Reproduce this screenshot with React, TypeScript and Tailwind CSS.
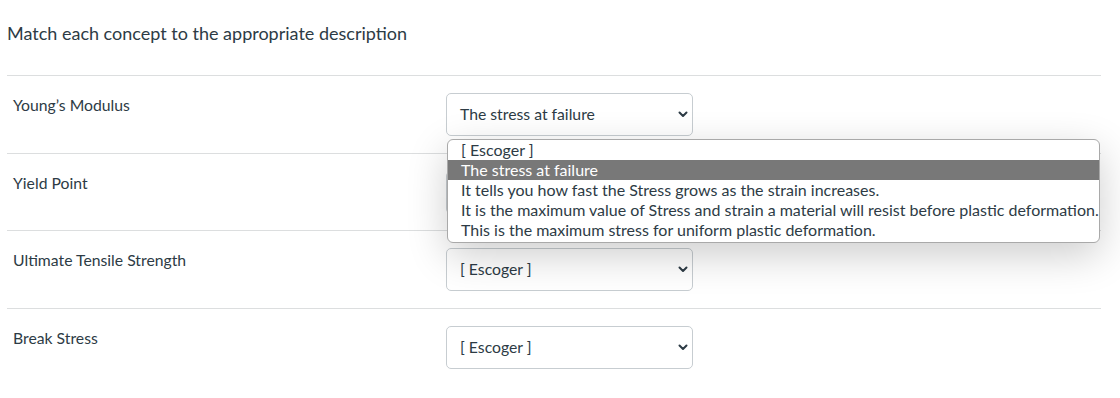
import React from "react";

const options = [
    "[ Escoger ]",
    "The stress at failure",
    "It tells you how fast the Stress grows as the strain increases.",
    "It is the maximum value of Stress and strain a material will resist before plastic deformation.",
    "This is the maximum stress for uniform plastic deformation.",
];

const rows = [
    { label: "Young\u2019s Modulus", value: "The stress at failure", open: true, h: "h-[78px]" },
    { label: "Yield Point", value: "[ Escoger ]", open: false, h: "h-[77px]" },
    { label: "Ultimate Tensile Strength", value: "[ Escoger ]", open: false, h: "h-[78px]" },
    { label: "Break Stress", value: "[ Escoger ]", open: false, h: "h-[78px]" },
];

const Chevron = () => (
    <svg width="10" height="7" viewBox="0 0 10 7" className="shrink-0">
        <path d="M1.5 1.5 L5 5 L8.5 1.5" fill="none" stroke="#2d3b45" strokeWidth="2" strokeLinecap="round" strokeLinejoin="round" />
    </svg>
);

const FakeSelect = ({ value }: { value: string }) => (
    <div className="w-[247px] h-[43px] border border-[#c7cdd1] rounded-[5px] bg-white flex items-center justify-between pl-[13px] pr-[4px] pb-[1px] text-[15.75px] text-[#2d3b45]">
        <span>{value}</span>
        <Chevron />
    </div>
);

const App = () => {
    return (
        <div className="w-[1120px] h-[398px] bg-white overflow-hidden text-[#2d3b45]" style={{ fontFamily: "Lato, 'Open Sans', sans-serif" }}>
            <div className="pl-[7px] pr-[19px] pt-[21px]">
                <div className="text-[18px] leading-6">Match each concept to the appropriate description</div>
                <div className="mt-[30px]">
                    {rows.map((row, i) => (
                        <div key={i} className={`${row.h} border-t border-[#dcdedf] flex`}>
                            <div className="w-[439px] pl-[6px] pt-[19px] text-[15.75px] leading-5">{row.label}</div>
                            <div className="relative pt-[17px]">
                                <FakeSelect value={row.value} />
                                {row.open && (
                                    <div className="absolute z-10 left-[1px] top-[63px] w-[653px] bg-white border border-[#a9a9a9] rounded-[6px] pb-[2px] shadow-[0_12px_40px_rgba(0,0,0,0.2)] overflow-hidden">
                                        {options.map((o, j) => (
                                            <div
                                                key={j}
                                                className={`${j === 1 ? "bg-[#787878] text-white" : "text-[#2d3b45]"} h-[20px] pl-[13px] text-[16px] leading-5 whitespace-nowrap`}
                                            >
                                                {o}
                                            </div>
                                        ))}
                                    </div>
                                )}
                            </div>
                        </div>
                    ))}
                </div>
            </div>
        </div>
    );
};

export default App;
